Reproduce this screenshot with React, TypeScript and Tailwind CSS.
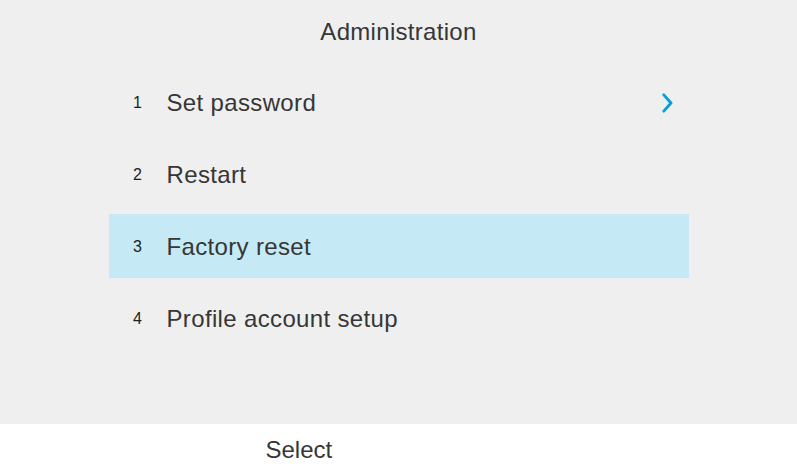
import React from 'react'

type Item = { n: number; label: string; chevron?: boolean; selected?: boolean }

const items: Item[] = [
  { n: 1, label: 'Set password', chevron: true },
  { n: 2, label: 'Restart' },
  { n: 3, label: 'Factory reset', selected: true },
  { n: 4, label: 'Profile account setup' },
]

export default function App() {
  return (
    <div
      className="flex h-[476px] w-[797px] flex-col overflow-hidden text-[#363636]"
      style={{ fontFamily: '"Liberation Sans", Arial, sans-serif' }}
    >
      <div className="flex flex-1 flex-col bg-[#efefef]">
        {/* header */}
        <div className="flex h-[62px] items-center justify-center pt-[1px] text-[24px] leading-none tracking-[0.3px]">
          Administration
        </div>

        {/* menu list */}
        <div className="mx-auto mt-2 flex w-[580px] flex-col gap-2">
          {items.map((item) => (
            <div
              key={item.n}
              className={`flex h-16 items-center ${item.selected ? 'bg-[#c5eaf5]' : ''}`}
            >
              <span className="w-[58px] pt-[2px] text-center text-[16px] leading-none text-[#1e1e1e]">{item.n}</span>
              <span className="flex-1 pt-[2px] text-[24px] leading-none tracking-[0.35px]">{item.label}</span>
              {item.chevron && (
                <svg width="11" height="20" viewBox="0 0 11 20" className="mr-4 mt-[1px]" fill="none">
                  <polyline
                    points="1.8,1.8 9,10 1.8,18.2"
                    stroke="#049fd9"
                    strokeWidth="2.8"
                    strokeLinecap="round"
                    strokeLinejoin="round"
                  />
                </svg>
              )}
            </div>
          ))}
        </div>
      </div>

      {/* softkeys */}
      <div className="grid h-[52px] grid-cols-4 bg-white">
        <div />
        <div className="flex items-center justify-center text-[24px] leading-none">Select</div>
        <div />
        <div />
      </div>
    </div>
  )
}
